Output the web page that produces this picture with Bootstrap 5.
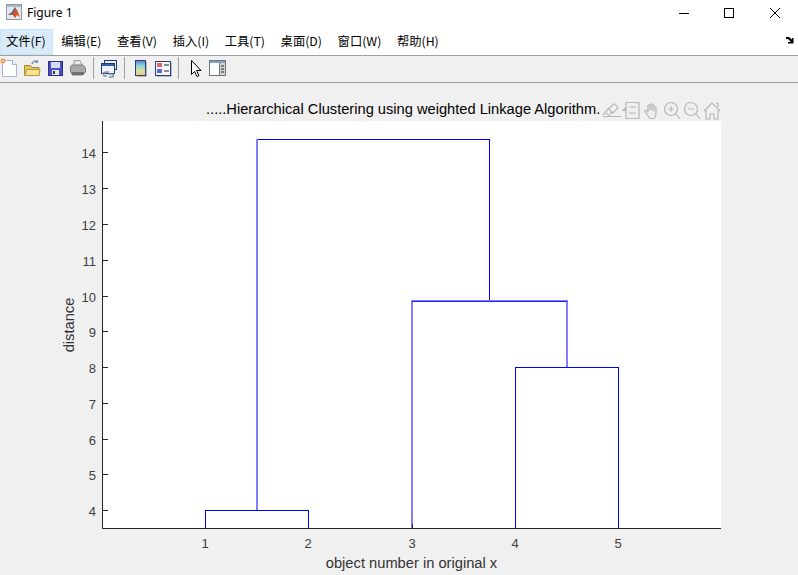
<!DOCTYPE html>
<html lang="zh">
<head>
<meta charset="utf-8">
<title>Figure 1</title>
<link href="https://cdn.jsdelivr.net/npm/bootstrap@5.3.0/dist/css/bootstrap.min.css" rel="stylesheet">
<style>
html,body{height:100%;}
body{margin:0;background:#f0f0f0;overflow:hidden;font-family:"Liberation Sans","Noto Sans CJK SC",sans-serif;color:#000;}
.win-title{height:28px;background:#fff;font-size:12px;padding-left:6px;}
.win-title .cap{margin-left:5px;padding-bottom:2px;font-family:"Noto Sans","Noto Sans CJK SC",sans-serif;font-size:12px;}
.win-btns svg{display:block;}
.win-btn{width:46px;height:28px;padding-bottom:2px;display:flex;align-items:center;justify-content:center;}
.menu-row{height:28px;background:#fff;border-bottom:1px solid #a0a0a0;}
.menu-it{font-size:12.3px;height:26px;line-height:25px;margin-top:1px;padding:0 7px 0 6px;margin-right:2.6px;font-family:"Noto Sans CJK SC","Liberation Sans",sans-serif;white-space:nowrap;}
.menu-it.on{background:#d9ebf9;box-shadow:inset 0 0 0 1px #cce4f7;}
.corner-arrow{right:4px;top:9px;}
.tool-row{height:27px;background:#f0f0f0;border-bottom:1px solid #a0a0a0;padding-bottom:2px;}
.tool-row svg{display:block;flex:none;}
.tsep{width:1px;height:22px;background:#a0a0a0;flex:none;}
.tg3{margin-left:3px;}.tg4{margin-left:4px;}.tg6{margin-left:6px;}.tg7{margin-left:7px;}.tg8{margin-left:8px;}
.plot{display:block;width:798px;height:492px;}
.ax{font-family:"Liberation Sans",sans-serif;font-size:13px;fill:#404040;}
.lbl{font-family:"Liberation Sans",sans-serif;font-size:14.7px;fill:#333;}
</style>
</head>
<body>
<div class="win-title d-flex align-items-center">
  <svg width="16" height="16" class="mb-1" viewBox="0 0 16 16"><rect x=".5" y=".5" width="15" height="15" fill="#e3e8ee" stroke="#8f9aa6"/><rect x="1" y="1" width="14" height="2" fill="#a9b9cc"/><path d="M2 11l4-3 3-5 2 3 3 7-3-2-2 3-2-3z" fill="#d9531e"/><path d="M2 11l4-3 3-5-1 6z" fill="#2f6fb5"/></svg>
  <span class="cap">Figure 1</span>
  <div class="win-btns ms-auto d-flex">
    <div class="win-btn"><svg width="12" height="12" viewBox="0 0 12 12"><path d="M2 6.500h10" stroke="#000"/></svg></div>
    <div class="win-btn"><svg width="12" height="12" viewBox="0 0 12 12"><rect x="1.500" y="1.500" width="9" height="9" fill="none" stroke="#000"/></svg></div>
    <div class="win-btn"><svg width="12" height="12" viewBox="0 0 12 12"><path d="M1 1l10 10M11 1L1 11" stroke="#000" fill="none"/></svg></div>
  </div>
</div>
<div class="menu-row d-flex align-items-start position-relative">
  <div class="menu-it on">文件(F)</div>
  <div class="menu-it">编辑(E)</div>
  <div class="menu-it">查看(V)</div>
  <div class="menu-it">插入(I)</div>
  <div class="menu-it">工具(T)</div>
  <div class="menu-it">桌面(D)</div>
  <div class="menu-it">窗口(W)</div>
  <div class="menu-it">帮助(H)</div>
  <svg class="position-absolute corner-arrow" width="8" height="7" viewBox="0 0 8 7"><path d="M0 0h3l3 2.500V1h1.500v5.500H2V5h3L2 2H0z" fill="#000"/></svg>
</div>
<div class="tool-row d-flex align-items-center">
  <svg width="20" height="20" viewBox="0 0 20 20"><path d="M2.500 2.500h10l4 4v12h-14z" fill="#fff" stroke="#9db9d6"/><path d="M12.500 2.500v4h4" fill="#eef4fa" stroke="#9db9d6"/><circle cx="3" cy="3" r="2.400" fill="#ef8f3c"/><circle cx="3" cy="3" r="1" fill="#fbe0b0"/></svg>
  <svg class="tg3" width="18" height="20" viewBox="0 0 18 20"><path d="M1.500 7.500h6l1.500 2h7v8h-14.500z" fill="#e8c55c" stroke="#a98a36"/><path d="M1.500 17.500l2.500-6h13l-1 6z" fill="#f7e28f" stroke="#b59a45"/><path d="M9 6c1-3 4-4 6-2" fill="none" stroke="#6d8db0" stroke-width="1.500"/><path d="M15 2v3h-3z" fill="#6d8db0"/></svg>
  <svg class="tg6" width="18" height="20" viewBox="0 0 18 20"><rect x="1.500" y="3.500" width="14" height="14" fill="#4c4fc4" stroke="#2c2f80"/><rect x="4" y="4" width="9" height="6" fill="#d8dcf4"/><rect x="5" y="12" width="7" height="5" fill="#e8e8ee"/><rect x="6" y="13" width="2" height="3" fill="#30305a"/></svg>
  <svg class="tg4" width="18" height="20" viewBox="0 0 18 20"><path d="M5 2.500h6l2 5H5z" fill="#e8e8e8" stroke="#9a9a9a"/><path d="M1.500 9c0-1 1-2 2-2h10c1 0 3 2 3 4v3l-3 3h-10l-2-3z" fill="#a9a9a9" stroke="#7d7d7d"/><path d="M3 14h12v3H3z" fill="#6f6f6f"/></svg>
  <div class="tsep tg6"></div>
  <svg class="tg6" width="18" height="20" viewBox="0 0 18 20"><rect x="4.500" y="2.500" width="12" height="9" fill="#e6eefb" stroke="#1f3a78"/><rect x="1.500" y="5.500" width="13" height="10" fill="#eef3fb" stroke="#1f3a78"/><rect x="2" y="6" width="12" height="2" fill="#3a5da8"/><path d="M3 16c0-2 3-2 4-2h2M7 18H5c-2 0-2-3 0-3M8 16h4c2 0 2 3 0 3H9" fill="none" stroke="#7f8ea3" stroke-width="1.500"/></svg>
  <div class="tsep tg6"></div>
  <svg class="tg7" width="16" height="20" viewBox="0 0 16 20"><defs><linearGradient id="cbg" x1="0" y1="0" x2="0" y2="1"><stop offset="0" stop-color="#5f7fd0"/><stop offset=".35" stop-color="#8ed3d8"/><stop offset=".7" stop-color="#d8e0a0"/><stop offset="1" stop-color="#f5c87a"/></linearGradient></defs><rect x="5" y="4" width="10" height="15" fill="#b8b8c4"/><rect x="3.500" y="2.500" width="10" height="15" fill="url(#cbg)" stroke="#2c3e78"/></svg>
  <svg class="tg6" width="18" height="20" viewBox="0 0 18 20"><rect x="3" y="5" width="15" height="14" fill="#b8b8c4"/><rect x="1.500" y="3.500" width="15" height="14" fill="#f4f6fb" stroke="#2c3e78"/><rect x="3" y="5" width="5" height="4" fill="#e8606a"/><rect x="3" y="11" width="5" height="4" fill="#5c66dc"/><path d="M10 7h5M10 13h5" stroke="#222"/></svg>
  <div class="tsep tg6"></div>
  <svg class="tg8" width="18" height="20" viewBox="0 0 18 20"><path d="M4.500 2.500v14l3-3 2.500 5 2-1-2.500-5h4.500z" fill="#fff" stroke="#000"/></svg>
  <svg class="tg4" width="18" height="20" viewBox="0 0 18 20"><rect x=".5" y="2.500" width="16" height="15" fill="#fff" stroke="#6d7480"/><rect x="1" y="3" width="15" height="2" fill="#86a2c4"/><rect x="10" y="5" width="6" height="12" fill="#d4d4d4"/><path d="M10.500 5v12" stroke="#6d7480"/><path d="M12 8h3M12 11h3M12 14h3" stroke="#222"/></svg>
</div>
<svg class="plot" viewBox="0 83 798 492" xmlns="http://www.w3.org/2000/svg">
  <rect x="102" y="121" width="619" height="407" fill="#fff"/>
  <g stroke="#262626" shape-rendering="crispEdges" fill="none">
    <path d="M205.500 528v-6M308.500 528v-6M515.500 528v-6M618.500 528v-6"/>
  </g>
  <g fill="none" stroke="#0000ff" shape-rendering="crispEdges">
    <path d="M205.500 528V510.500H308.500V528"/>
    <path d="M515.500 528V367.500H618.500V528"/>
    <path d="M257 139.500H489.500V301"/>
    <path d="M257 510V139" stroke="#8080ff" stroke-width="2"/>
    <path d="M412 528V301H567V367" stroke="#8080ff" stroke-width="2"/>
    <path d="M412 301.500H567" stroke="#2020ff"/>
  </g>
  <g stroke="#262626" shape-rendering="crispEdges" fill="none">
    <path d="M102.500 121V528.500H721"/>
    <path d="M102 152.500h6M102 188.500h6M102 224.500h6M102 260.500h6M102 296.500h6M102 331.500h6M102 367.500h6M102 403.500h6M102 439.500h6M102 474.500h6M102 510.500h6"/>
    <path d="M412.500 528v-4"/>
  </g>
  <g class="ax" text-anchor="end">
    <text x="96" y="158">14</text><text x="96" y="194">13</text><text x="96" y="230">12</text><text x="96" y="266">11</text><text x="96" y="302">10</text><text x="96" y="337">9</text><text x="96" y="373">8</text><text x="96" y="409">7</text><text x="96" y="445">6</text><text x="96" y="480">5</text><text x="96" y="516">4</text>
  </g>
  <g class="ax" text-anchor="middle">
    <text x="205" y="548">1</text><text x="308" y="548">2</text><text x="412" y="548">3</text><text x="515" y="548">4</text><text x="618" y="548">5</text>
  </g>
  <text class="lbl" x="411.500" y="568" text-anchor="middle">object number in original x</text>
  <text class="lbl" transform="translate(74 325) rotate(-90)" text-anchor="middle">distance</text>
  <text x="206" y="114" font-family="Liberation Sans" font-size="14.670" fill="#000">.....Hierarchical Clustering using weighted Linkage Algorithm.</text>
  <g fill="none" stroke="#b8b8b8" stroke-width="1.200">
    <path d="M603 115l5-6 6-5 2 1 2 3-5 5-4-4M603 116.500h18M606 113l4 3M610 112l2 2" />
    <path d="M626 102.500h13v16h-13zM626 110.500h-3l3-3M626 110.500l0 3M629 107h7M629 113h7"/>
    <path d="M650 118.500c-2-3-5-6-5-8 1-1 2 0 3 2l0-7c1-1 2-1 2 0v5-6c1-1 2-1 2 0v6-5c1-1 2-1 2 0v6-4c1-1 2-1 2 0v6c0 2-1 4-2 5z"/>
    <circle cx="671" cy="109" r="6.500"/><path d="M676 114l4 5M668 109h6M671 106v6"/>
    <circle cx="691" cy="109" r="6.500"/><path d="M696 114l4 5M688 109h6"/>
    <path d="M704 111l8-8 8 8M706 110v9h4v-5h4v5h4v-9M716 103h2v4"/>
  </g>
</svg>
<script src="https://cdn.jsdelivr.net/npm/bootstrap@5.3.0/dist/js/bootstrap.bundle.min.js"></script>
</body>
</html>
